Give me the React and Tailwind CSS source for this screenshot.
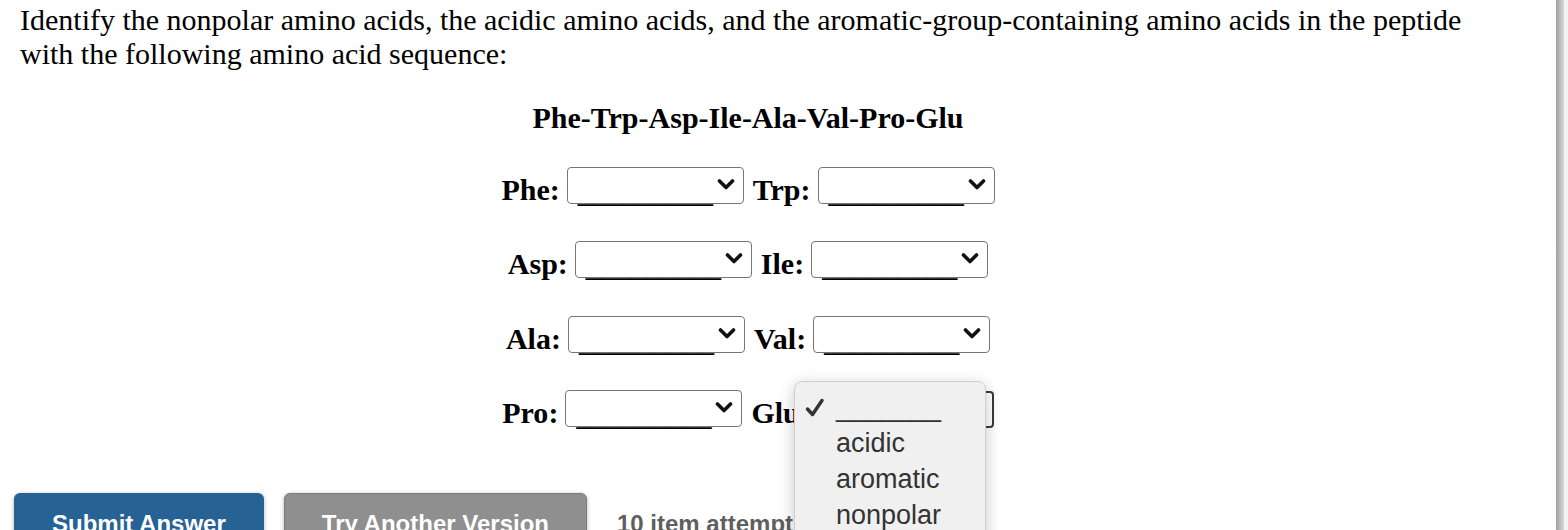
import React from "react";

const ROWS = [
  ["Phe", "Trp"],
  ["Asp", "Ile"],
  ["Ala", "Val"],
  ["Pro", "Glu"],
];

const OPTIONS = ["_______", "acidic", "aromatic", "nonpolar"];

const Chevron = () => (
  <svg width="18" height="13" viewBox="0 0 18 13" className="ml-auto mr-[8px] mb-[12px] shrink-0">
    <path d="M2.5 3 L9 9.5 L15.5 3" fill="none" stroke="#111" strokeWidth="3.6" strokeLinecap="round" strokeLinejoin="round" />
  </svg>
);

// fake closed <select>, underscores are its current (blank) value
const FakeSelect = ({ focused }) => (
  <div
    className={
      "flex items-end h-[37px] w-[177px] rounded-[4px] bg-white pl-[10px] " +
      (focused ? "border-2 border-[#3a3a3a]" : "border border-[#767676]")
    }
  >
    <span className="mb-[-2px] text-[27px] leading-[27px] text-black font-['Liberation_Sans',Arial,sans-serif]">
      _________
    </span>
    <Chevron />
  </div>
);

const App = () => {
  return (
    <div className="relative flex h-[530px] w-full overflow-hidden bg-white">
      <main className="flex-1 pl-[20px] pr-[80px] pt-[3px] font-['Liberation_Serif','Times_New_Roman',serif] text-black">
        <p className="text-[30px] leading-[34px]">
          Identify the nonpolar amino acids, the acidic amino acids, and the aromatic-group-containing amino acids in the peptide with the following amino acid sequence:
        </p>

        <p className="mt-[30px] text-center text-[30px] font-bold leading-[34px]">
          Phe-Trp-Asp-Ile-Ala-Val-Pro-Glu
        </p>

        <div className="mt-[32px] flex flex-col gap-[34.4px]">
          {ROWS.map(([a, b]) => (
            <div key={a} className="flex items-baseline justify-center">
              <span className="text-[30px] font-bold leading-[34px]">{a}:</span>
              <span className="ml-[7px]">
                <FakeSelect />
              </span>
              <span className="ml-[9px] text-[30px] font-bold leading-[34px]">{b}:</span>
              <span className="ml-[7px]">
                <FakeSelect focused={b === "Glu"} />
              </span>
            </div>
          ))}
        </div>

        <div className="-ml-[6px] mt-[63px] flex items-start font-['Liberation_Sans',Arial,sans-serif]">
          <button className="rounded-[6px] bg-[#266294] px-[38px] pt-[19px] pb-[20px] text-[24px] font-bold leading-[24px] text-white shadow-[0_1px_4px_rgba(0,0,0,0.3)]">
            Submit Answer
          </button>
          <button className="ml-[20px] rounded-[6px] border border-[#7d7d7d] bg-[#8f8f8f] px-[37px] pt-[18px] pb-[20px] text-[24px] font-bold leading-[24px] text-white shadow-[0_1px_4px_rgba(0,0,0,0.3)]">
            Try Another Version
          </button>
          <span className="ml-[30px] pt-[19px] text-[24px] font-bold leading-[24px] text-[#5f5f5f]">
            10 item attempts remaining
          </span>
        </div>
      </main>

      {/* window edge on the right */}
      <div className="flex w-[12px] shrink-0">
        <div className="w-[8px] bg-gradient-to-r from-[#9f9f9f] to-[#d9d9d9]" />
        <div className="w-[4px] bg-[#f3f3f3]" />
      </div>

      {/* open dropdown of the Glu select */}
      <div className="absolute left-[794px] top-[381px] h-[170px] w-[192px] rounded-[8px] border border-[#cfcfcf] bg-[#f0f0f0] pt-[7px] shadow-[0_4px_16px_rgba(0,0,0,0.22)] font-['Liberation_Sans',Arial,sans-serif]">
        {OPTIONS.map((o, i) => (
          <div key={o} className="relative h-[36px] pl-[41px] text-[27px] leading-[36px] text-[#333]">
            {i === 0 && (
              <svg width="20" height="20" viewBox="0 0 20 20" className="absolute left-[10px] top-[9px]">
                <path d="M2.5 11 L7.5 16.5 L17 2.5" fill="none" stroke="#333" strokeWidth="3.4" strokeLinecap="round" strokeLinejoin="round" />
              </svg>
            )}
            {o}
          </div>
        ))}
      </div>
    </div>
  );
};

export default App;
